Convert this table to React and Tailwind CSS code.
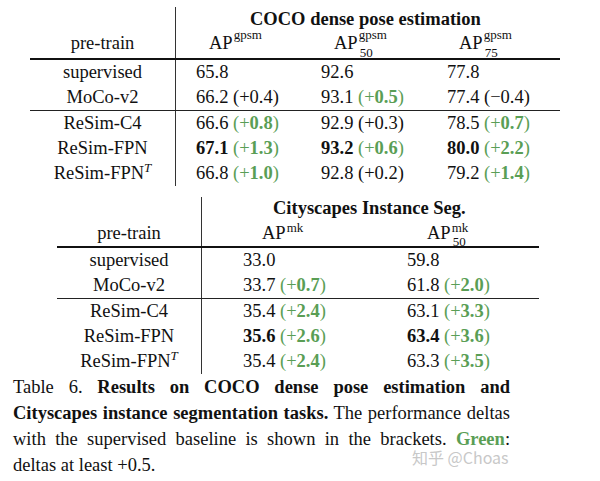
const COCO_ROWS = [
  {
    name: "supervised",
    cells: [{ v: "65.8" }, { v: "92.6" }, { v: "77.8" }],
  },
  {
    name: "MoCo-v2",
    cells: [
      { v: "66.2", d: "+0.4" },
      { v: "93.1", d: "+0.5", g: true },
      { v: "77.4", d: "\u22120.4" },
    ],
  },
  {
    name: "ReSim-C4",
    sep: true,
    cells: [
      { v: "66.6", d: "+0.8", g: true },
      { v: "92.9", d: "+0.3" },
      { v: "78.5", d: "+0.7", g: true },
    ],
  },
  {
    name: "ReSim-FPN",
    cells: [
      { v: "67.1", d: "+1.3", g: true, b: true },
      { v: "93.2", d: "+0.6", g: true, b: true },
      { v: "80.0", d: "+2.2", g: true, b: true },
    ],
  },
  {
    name: "ReSim-FPN",
    t: true,
    cells: [
      { v: "66.8", d: "+1.0", g: true },
      { v: "92.8", d: "+0.2" },
      { v: "79.2", d: "+1.4", g: true },
    ],
  },
];

const CITY_ROWS = [
  { name: "supervised", cells: [{ v: "33.0" }, { v: "59.8" }] },
  {
    name: "MoCo-v2",
    cells: [
      { v: "33.7", d: "+0.7", g: true },
      { v: "61.8", d: "+2.0", g: true },
    ],
  },
  {
    name: "ReSim-C4",
    sep: true,
    cells: [
      { v: "35.4", d: "+2.4", g: true },
      { v: "63.1", d: "+3.3", g: true },
    ],
  },
  {
    name: "ReSim-FPN",
    cells: [
      { v: "35.6", d: "+2.6", g: true, b: true },
      { v: "63.4", d: "+3.6", g: true, b: true },
    ],
  },
  {
    name: "ReSim-FPN",
    t: true,
    cells: [
      { v: "35.4", d: "+2.4", g: true },
      { v: "63.3", d: "+3.5", g: true },
    ],
  },
];

// AP with stacked super/subscript; the scripts sit outside the line box
function AP({ sup, sub, low }) {
  return (
    <span className="relative">
      AP
      <span
        className={`absolute left-full ml-px text-[13px] leading-none whitespace-nowrap ${
          low ? "top-[-2px]" : "top-[-5px]"
        }`}
      >
        {sup}
      </span>
      {sub && (
        <span
          className={`absolute left-full ml-[2px] text-[13px] leading-none ${
            low ? "top-[12px]" : "top-[13px]"
          }`}
        >
          {sub}
        </span>
      )}
    </span>
  );
}

function Cell({ c }) {
  return (
    <>
      <span className={c.b ? "font-bold" : ""}>{c.v}</span>
      {c.d &&
        (c.g ? (
          <span className="text-[#5a9e55]">
            {" "}({c.d[0]}
            <span className="font-bold">{c.d.slice(1)}</span>)
          </span>
        ) : (
          <span> ({c.d})</span>
        ))}
    </>
  );
}

function Name({ row }) {
  return (
    <>
      {row.name}
      {row.t && (
        <span className="relative top-[-7px] italic text-[13px]">T</span>
      )}
    </>
  );
}

export default function App() {
  return (
    <div className="relative w-[600px] h-[481px] overflow-hidden bg-white text-[#111] text-[18.5px] [font-family:Liberation_Serif,Times_New_Roman,serif]">
      {/* COCO dense pose */}
      <div className="ml-[30px] w-[530px] pt-[7px]">
        <div className="flex h-[25px] leading-[25px]">
          <div className="w-[146px] border-r border-[#333]" />
          <div className="pl-[74px] font-bold">COCO dense pose estimation</div>
        </div>
        <div className="flex h-[26px] leading-[22px]">
          <div className="w-[146px] border-r border-[#333] text-center">pre-train</div>
          <div className="flex pl-[33px]">
            <div className="w-[125px]">
              <AP sup="gpsm" />
            </div>
            <div className="w-[125px]">
              <AP sup="gpsm" sub="50" />
            </div>
            <div>
              <AP sup="gpsm" sub="75" />
            </div>
          </div>
        </div>
        <div className="h-[2px] bg-[#111]" />
        {COCO_ROWS.map((row, i) => (
          <div key={i}>
            {row.sep && <div className="h-px bg-[#222]" />}
            <div className="flex h-[25px] leading-[25px]">
              <div className="w-[146px] border-r border-[#333] text-center">
                <Name row={row} />
              </div>
              <div className="flex pl-[20px]">
                <div className="w-[125px]">
                  <Cell c={row.cells[0]} />
                </div>
                <div className="w-[126px]">
                  <Cell c={row.cells[1]} />
                </div>
                <div>
                  <Cell c={row.cells[2]} />
                </div>
              </div>
            </div>
          </div>
        ))}
      </div>

      {/* Cityscapes instance seg */}
      <div className="ml-[57px] w-[482px] mt-[11px]">
        <div className="flex h-[23px] leading-[23px]">
          <div className="w-[145px] border-r border-[#333]" />
          <div className="pl-[71px] font-bold">Cityscapes Instance Seg.</div>
        </div>
        <div className="flex h-[26px] leading-[26px]">
          <div className="w-[145px] border-r border-[#333] text-center">pre-train</div>
          <div className="flex pl-[60px]">
            <div className="w-[165px]">
              <AP sup="mk" low />
            </div>
            <div>
              <AP sup="mk" sub="50" low />
            </div>
          </div>
        </div>
        <div className="h-[2px] bg-[#111]" />
        {CITY_ROWS.map((row, i) => (
          <div key={i}>
            {row.sep && <div className="h-px bg-[#222]" />}
            <div className="flex h-[25px] leading-[25px]">
              <div className="w-[145px] border-r border-[#333] text-center">
                <Name row={row} />
              </div>
              <div className="flex pl-[41px]">
                <div className="w-[164px]">
                  <Cell c={row.cells[0]} />
                </div>
                <div>
                  <Cell c={row.cells[1]} />
                </div>
              </div>
            </div>
          </div>
        ))}
      </div>

      {/* caption */}
      <div className="ml-[13px] w-[497px] leading-[26px]">
        <div className="text-justify [text-align-last:justify]">
          Table 6. <span className="font-bold">Results on COCO dense pose estimation and</span>
        </div>
        <div className="text-justify [text-align-last:justify]">
          <span className="font-bold">Cityscapes instance segmentation tasks.</span> The performance deltas
        </div>
        <div className="text-justify [text-align-last:justify]">
          with the supervised baseline is shown in the brackets.{" "}
          <span className="font-bold text-[#5a9e55]">Green</span>:
        </div>
        <div>deltas at least +0.5.</div>
      </div>

      {/* watermark */}
      <div className="absolute left-[412px] top-[449px] text-[16px] leading-none text-[#c8c8c8] [font-family:Noto_Sans_CJK_SC,sans-serif] whitespace-nowrap">
        知乎 @Choas
      </div>
    </div>
  );
}
